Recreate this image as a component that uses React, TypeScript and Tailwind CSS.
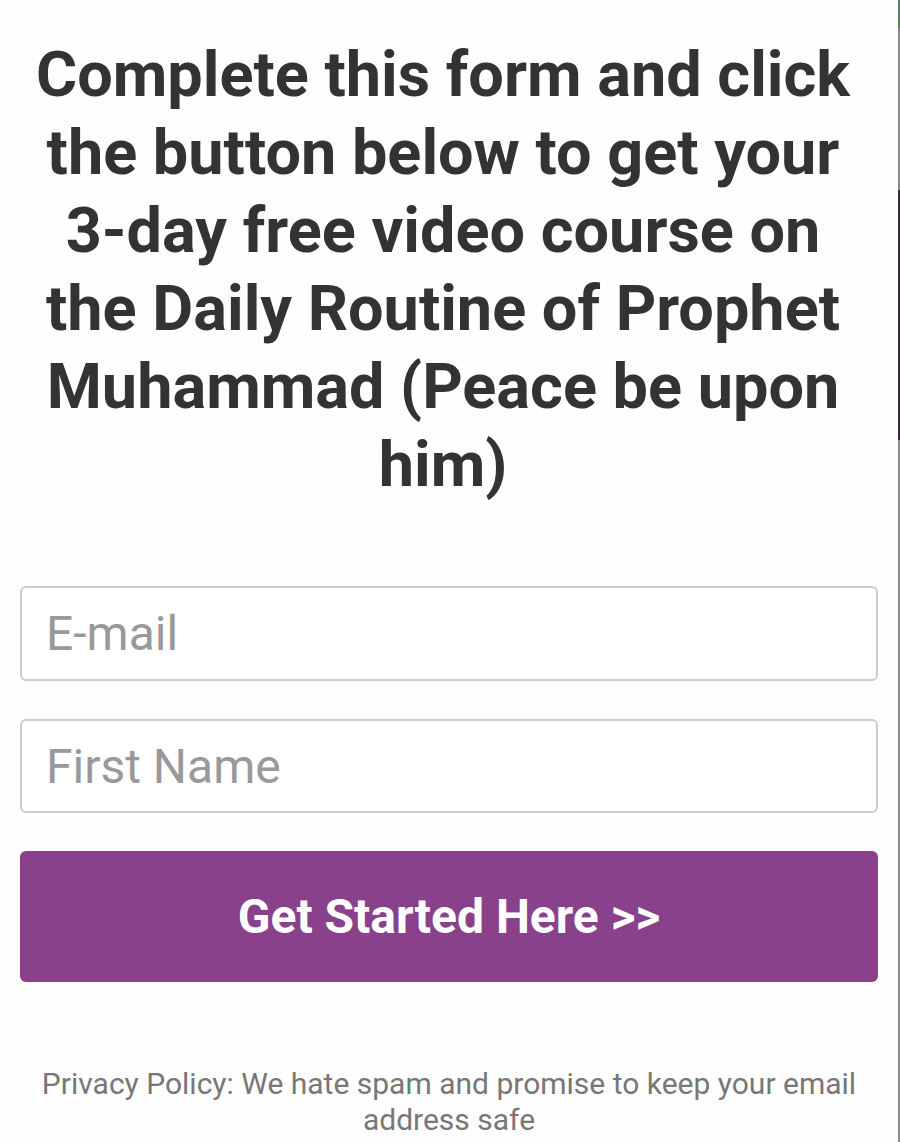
import React from "react";

const App = () => {
  return (
    <div className="flex min-h-[1142px] w-[900px] bg-[#fefefe]" style={{ fontFamily: "Roboto, 'Liberation Sans', sans-serif" }}>
      <div className="flex-1 px-[20px] pt-[36px]">
        <h1 className="pr-[12px] text-center text-[63px] font-bold leading-[78px] text-[#333333]">
          Complete this form and click the button below to get your 3-day free video course on the Daily Routine of Prophet Muhammad (Peace be upon him)
        </h1>

        <form className="mt-[82px] flex flex-col gap-[38px]" onSubmit={(e) => e.preventDefault()}>
          <input
            type="email"
            placeholder="E-mail"
            className="h-[95px] w-full rounded-[6px] border-2 border-[#cccccc] bg-white px-[24px] text-[48px] text-[#333] placeholder:text-[#999999] outline-none"
          />
          <input
            type="text"
            placeholder="First Name"
            className="h-[94px] w-full rounded-[6px] border-2 border-[#cccccc] bg-white px-[24px] text-[48px] text-[#333] placeholder:text-[#999999] outline-none"
          />
          <button
            type="submit"
            className="h-[131px] w-full rounded-[6px] bg-[#8a418c] text-[48px] font-bold text-white"
          >
            Get Started Here &gt;&gt;
          </button>
        </form>

        <p className="mt-[84px] text-center text-[30px] leading-[36px] text-[#777777]">
          Privacy Policy: We hate spam and promise to keep your email address safe
        </p>
      </div>

      {/* edge of the page behind */}
      <div className="flex w-[2px] flex-col">
        <div className="h-[28px] bg-[#5f7d5f]"></div>
        <div className="h-[162px] bg-[#8a8a8a]"></div>
        <div className="h-[250px] bg-[#3d2b42]"></div>
        <div className="flex-1 bg-[#8a8a8a]"></div>
      </div>
    </div>
  );
};

export default App;
